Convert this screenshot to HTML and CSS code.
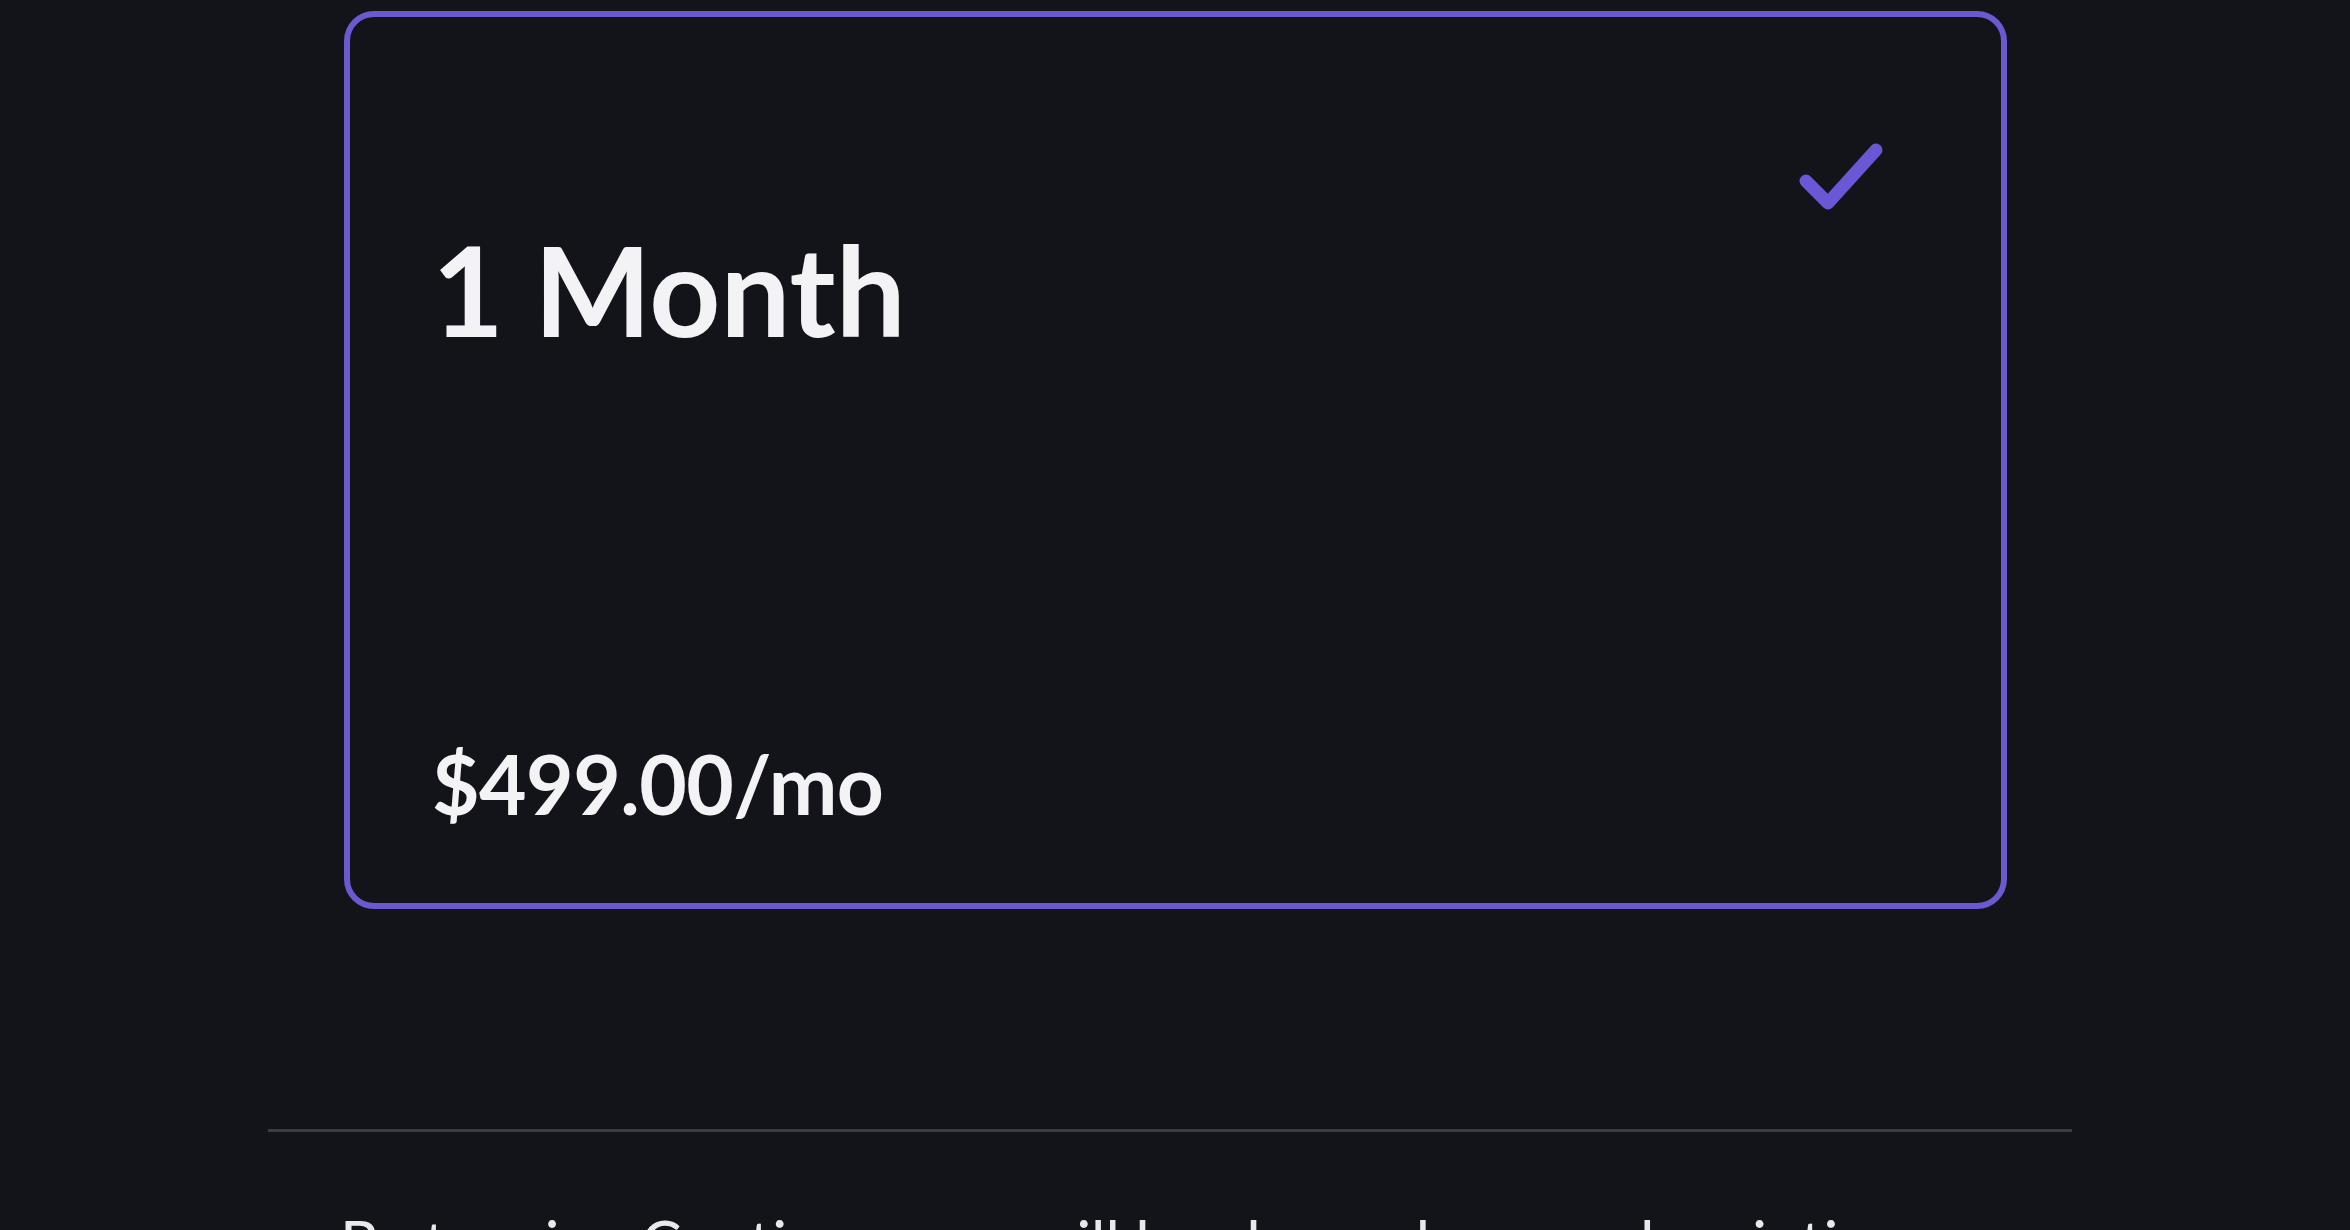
FILE: index.html
```html
<!DOCTYPE html>
<html lang="en">
<head>
  <meta charset="UTF-8">
  <title>Choose a Plan</title>
  <link rel="stylesheet" href="styles.css">
</head>
<body>
  <div class="plans">
    <div class="plan plan--selected">
      <h2 class="plan__name">1 Month</h2>
      <p class="plan__price">$499.00/mo</p>
      <svg class="plan__check" width="96" height="80" viewBox="0 0 96 80">
        <path d="M12 43 L34 65 L82 12" fill="none" stroke="#6a57d6" stroke-width="13" stroke-linecap="round" stroke-linejoin="round"/>
      </svg>
    </div>
    <hr class="plans__divider">
    <p class="plans__notice">By tapping Continue, you will be charged your subscription</p>
  </div>
</body>
</html>
```

FILE: styles.css
```css
html {
  box-sizing: border-box;
  background: #121419;
}

*, *:before, *:after {
  box-sizing: inherit;
}

body {
  margin: 0;
  height: 1230px;
  overflow: hidden;
  font-family: Lato, 'Noto Sans', sans-serif;
  color: #f3f3f5;
}

.plans {
  width: 1804px;
  margin-left: 268px;
  padding-top: 11px;
}

.plan {
  position: relative;
  display: flex;
  flex-direction: column;
  justify-content: space-between;
  width: 1663px;
  height: 898px;
  margin-left: 76px;
  padding: 210px 82px 79px;
  border: 6px solid #6a59cf;
  border-radius: 30px;
}

.plan__name {
  margin: 0;
  font-size: 124px;
  font-weight: 700;
  line-height: 1;
}

.plan__price {
  margin: 0;
  font-size: 82px;
  font-weight: 700;
  line-height: 1;
  letter-spacing: -0.5px;
}

.plan__check {
  position: absolute;
  top: 121px;
  right: 111px;
}

.plans__divider {
  margin: 220px 0 0;
  height: 3px;
  border: 0;
  background: #3a3d44;
}

.plans__notice {
  margin: 74px 0 0;
  padding-left: 72px;
  font-size: 61px;
  line-height: 1.2;
  color: #e9e9ec;
  white-space: nowrap;
}
```
